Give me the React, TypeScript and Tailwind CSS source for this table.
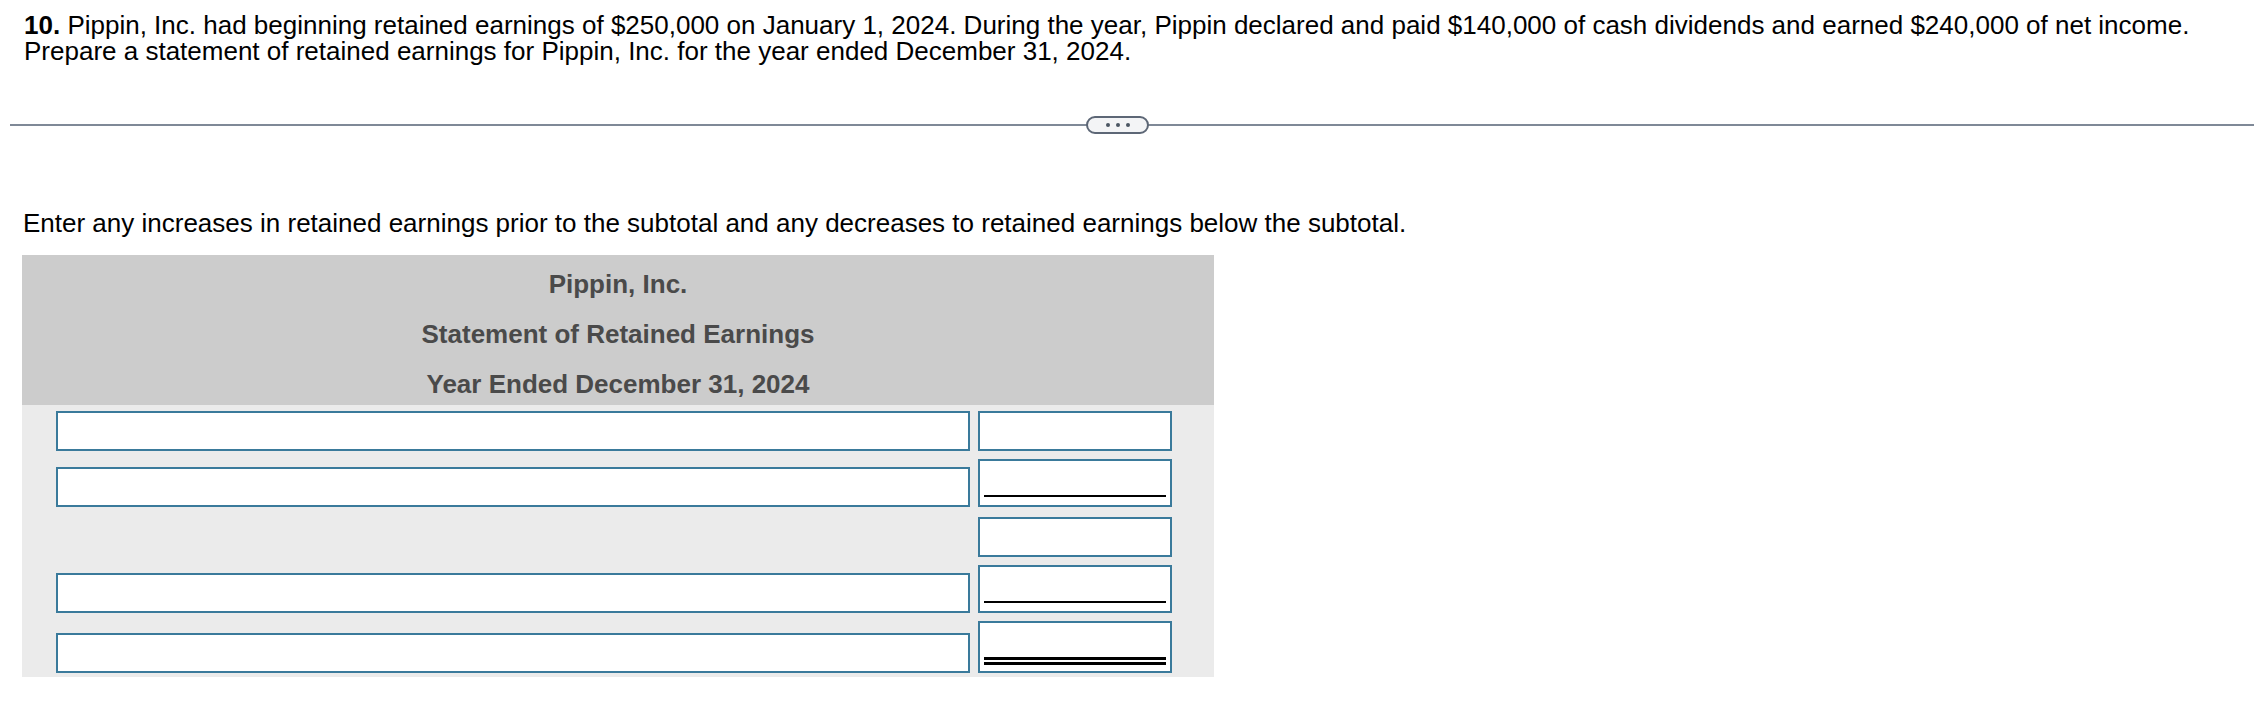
import React from "react";

const BORDER = "border-2 border-[#3a7a9b] bg-white";

function LeftBox({ h = "h-[40px]" }: { h?: string }) {
  return <div className={`w-[914px] ${h} ${BORDER} shrink-0`} />;
}

function RightBox({ kind }: { kind: "plain" | "single" | "double" }) {
  if (kind === "plain") {
    return <div className={`w-[194px] h-[40px] ${BORDER} shrink-0`} />;
  }
  if (kind === "single") {
    return (
      <div className={`w-[194px] h-[48px] ${BORDER} shrink-0 flex flex-col justify-end px-[4px] pb-[8px]`}>
        <div className="h-[2px] bg-black" />
      </div>
    );
  }
  return (
    <div className={`w-[194px] h-[52px] ${BORDER} shrink-0 flex flex-col justify-end px-[4px] pb-[6px]`}>
      <div className="h-[3px] bg-black" />
      <div className="h-[2px]" />
      <div className="h-[3px] bg-black" />
    </div>
  );
}

export default function App() {
  return (
    <div className="w-[2254px] h-[706px] bg-white text-black font-['Liberation_Sans',Arial,Helvetica,sans-serif] overflow-hidden">
      <div className="pl-[24px] pt-[12px] text-[26px] leading-[26px]">
        <p>
          <span className="font-bold">10.</span> Pippin, Inc. had beginning retained earnings of $250,000 on January 1, 2024. During the year, Pippin declared and paid $140,000 of cash dividends and earned $240,000 of net income.
        </p>
        <p>Prepare a statement of retained earnings for Pippin, Inc. for the year ended December 31, 2024.</p>
      </div>

      <div className="relative mt-[60px] ml-[10px] h-[2px] bg-[#7f8997]">
        <div className="absolute left-[1076px] top-[-8px] w-[63px] h-[18px] rounded-full border-2 border-[#5d6776] bg-[#f3f4f6] flex items-center justify-center gap-[6px]">
          <span className="w-[4px] h-[4px] rounded-full bg-[#4b5563]" />
          <span className="w-[4px] h-[4px] rounded-full bg-[#4b5563]" />
          <span className="w-[4px] h-[4px] rounded-full bg-[#4b5563]" />
        </div>
      </div>

      <p className="pl-[23px] mt-[82px] text-[26px] leading-[30px]">
        Enter any increases in retained earnings prior to the subtotal and any decreases to retained earnings below the subtotal.
      </p>

      <div className="ml-[22px] mt-[17px] w-[1192px]">
        <div className="h-[150px] bg-[#cccccc] pt-[4px] flex flex-col items-center text-[26px] font-bold text-[#4a4a4a]">
          <div className="h-[50px] leading-[50px]">Pippin, Inc.</div>
          <div className="h-[50px] leading-[50px]">Statement of Retained Earnings</div>
          <div className="h-[50px] leading-[50px]">Year Ended December 31, 2024</div>
        </div>
        <div className="bg-[#ebebeb] pl-[34px] pt-[6px] pb-[4px] flex flex-col">
          <div className="flex items-end gap-[8px]">
            <LeftBox />
            <RightBox kind="plain" />
          </div>
          <div className="flex items-end gap-[8px] mt-[8px]">
            <LeftBox />
            <RightBox kind="single" />
          </div>
          <div className="flex items-end gap-[8px] mt-[10px]">
            <div className="w-[914px] shrink-0" />
            <RightBox kind="plain" />
          </div>
          <div className="flex items-end gap-[8px] mt-[8px]">
            <LeftBox />
            <RightBox kind="single" />
          </div>
          <div className="flex items-end gap-[8px] mt-[8px]">
            <LeftBox />
            <RightBox kind="double" />
          </div>
        </div>
      </div>
    </div>
  );
}
